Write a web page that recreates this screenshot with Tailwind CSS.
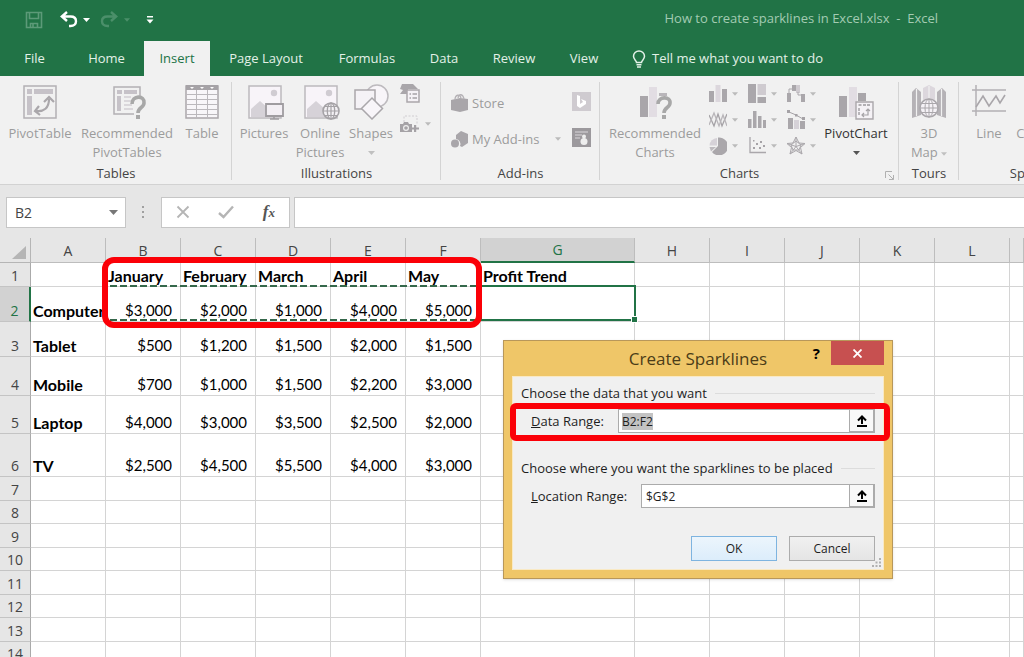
<!DOCTYPE html>
<html lang="en">
<head>
  <meta charset="UTF-8" />
  <meta name="viewport" content="width=device-width, initial-scale=1" />
  <title>How to create sparklines in Excel.xlsx - Excel</title>
  <script src="https://cdn.jsdelivr.net/npm/@tailwindcss/browser@4"></script>
</head>
<body class="flex h-screen flex-col overflow-hidden bg-[#e6e6e6] font-['Open_Sans','Noto_Sans',sans-serif] text-[13px] leading-[19px] text-[#444]">

  <!-- Title bar and ribbon tabs -->
  <header class="shrink-0 bg-[#217346] text-[#e3f1e8]">
    <div class="flex h-[41px] items-center justify-between pr-[86px] pb-px pl-6">
      <div class="flex items-center">
        <button title="Save" class="text-[#5c9a78]">
          <svg class="h-5 w-5" viewBox="0 0 20 20" fill="none" stroke="currentColor" stroke-width="1.6"><path d="M2.5 2.5h15v15h-15zM5.5 2.5v6h9v-6M6.500 17.500v-4h7v4M9 14v3" /></svg>
        </button>
        <button title="Undo" class="ml-4 flex items-center">
          <svg class="h-5 w-[18px]" viewBox="0 0 18 20" fill="none" stroke="#fff" stroke-width="2.4"><path d="M7 2L1.800 6.500l5.200 4.500M2 6.500h8.500c3.500 0 5.500 2 5.500 4.700s-2 4.800-5.500 4.800H9" /></svg>
          <svg class="ml-[5px] h-1 w-[7px]" viewBox="0 0 7 4" fill="#fff"><path d="M0 0h7L3.500 4z" /></svg>
        </button>
        <button title="Redo" class="ml-[10px] flex items-center">
          <svg class="h-5 w-[18px]" viewBox="0 0 18 20" fill="none" stroke="#4b8f6a" stroke-width="2.400"><path d="M11 2l5.200 4.500-5.200 4.500M16 6.500H7.500C4 6.500 2 8.500 2 11.200S4 16 7.500 16H9" /></svg>
          <svg class="ml-[6px] h-1 w-[6px]" viewBox="0 0 7 4" fill="#4b8f6a"><path d="M0 0h7L3.500 4z" /></svg>
        </button>
        <button title="Customize Quick Access Toolbar" class="ml-4">
          <svg class="h-2 w-2" viewBox="0 0 8 8" fill="#fff"><path d="M1 0h6v1.500H1zM.5 3.500h7L4 7.500z" /></svg>
        </button>
      </div>
      <div class="pb-1 whitespace-pre text-[#a3cbb3]">How to create sparklines in Excel.xlsx  -  Excel</div>
    </div>
    <nav class="flex h-[35px] items-stretch whitespace-nowrap">
      <button class="w-[69px]">File</button>
      <button class="w-[75px]">Home</button>
      <button class="w-[66px] bg-[#f1f1f1] text-[#217346]">Insert</button>
      <button class="w-[112px]">Page Layout</button>
      <button class="w-[90px]">Formulas</button>
      <button class="w-[64px]">Data</button>
      <button class="w-[76px]">Review</button>
      <button class="w-[64px]">View</button>
      <button class="ml-4 flex items-center gap-[6px]">
        <svg class="h-[18px] w-[14px]" viewBox="0 0 14 18" fill="none" stroke="currentColor" stroke-width="1.500"><path d="M4.500 12.500c0-2-3-3-3-6.200a5.500 5.300 0 0 1 11 0c0 3.200-3 4.200-3 6.200zM4.500 14.700h5M5 17h4" /></svg>
        Tell me what you want to do
      </button>
    </nav>
  </header>

  <!-- Ribbon -->
  <div class="flex h-[109px] shrink-0 overflow-hidden border-b border-[#d2d2d2] bg-[#f1f1f1] text-[#9c9c9c]">

    <section class="relative flex w-[232px] shrink-0 flex-col pt-2">
      <div class="flex flex-1 items-start pl-px">
        <button class="flex w-[78px] flex-col items-center gap-1">
          <svg class="h-9 w-9" viewBox="0 0 36 36" fill="none"><path d="M2 2h32v32H2z" stroke="#b3b0b4" stroke-width="1.500" /><path d="M5 5h5v5H5zM12 5h19v5H12zM5 12h5v19H5z" fill="#c6c2c8" /><path d="M14 27c8 1 13-3 13-12M17 22l-4 5 5 4M22 18l5-5 5 5" stroke="#aaa7ab" stroke-width="2.200" /></svg>
          <span>PivotTable</span>
        </button>
        <button class="flex w-24 flex-col items-center gap-1">
          <svg class="ml-[6px] h-9 w-9" viewBox="0 0 36 36" fill="none"><path d="M28 12V3H2v27h20" stroke="#b3b0b4" stroke-width="1.500" /><path d="M5 6h5v4H5zM12 6h13v4H12zM5 12h4v15H5z" fill="#c6c2c8" /><path d="M12 13h7M12 17h7M12 21h8M12 25h9" stroke="#d2ced4" stroke-width="1.500" /><path d="M20 20c0-9 13-9 12-1 0 5-6 4-6 10" stroke="#a8a8a8" stroke-width="3.600" /><path d="M24 31h4v4h-4z" fill="#a8a8a8" /></svg>
          <span>Recommended<br />PivotTables</span>
        </button>
        <button class="flex w-[54px] flex-col items-center gap-1">
          <svg class="h-9 w-9" viewBox="0 0 36 36" fill="none"><path d="M2 2h32v32H2z" fill="#f8f6f9" stroke="#aaa7ab" stroke-width="1.500" /><path d="M2 1h32v5H2z" fill="#a6a3a7" /><path d="M6 3h4l-2 2zM16 3h4l-2 2zM26 3h4l-2 2z" fill="#fff" /><path d="M2 10.500h32M2 15.500h32M2 20.500h32M2 25.500h32M2 30.500h32M12.500 6v28M23.500 6v28" stroke="#bbb8bc" /></svg>
          <span>Table</span>
        </button>
      </div>
      <h2 class="h-5 text-center text-[#444]">Tables</h2>
      <i class="absolute top-[6px] right-0 h-[98px] w-px bg-[#d4d4d4]"></i>
    </section>

    <section class="relative flex w-[209px] shrink-0 flex-col pt-2">
      <div class="flex flex-1 items-start pl-[2px]">
        <button class="flex w-[60px] flex-col items-center gap-1">
          <svg class="ml-1 h-9 w-9" viewBox="0 0 36 36" fill="none"><path d="M1 2h32v32H1z" fill="#f8f4f9" stroke="#bcb9bd" stroke-width="1.500" /><path d="M3 33v-8l9-8 9 8v8z" fill="#d6d2d8" /><circle cx="26" cy="9" r="3.200" fill="#d0ccd2" /><path d="M18 20h17v12H18z" fill="#f3eff4" stroke="#9f9ca0" stroke-width="1.800" /><path d="M26 32v3M22 35h9" stroke="#9f9ca0" stroke-width="1.600" /></svg>
          <span>Pictures</span>
        </button>
        <button class="flex w-[52px] flex-col items-center gap-1">
          <svg class="ml-1 h-9 w-9" viewBox="0 0 36 36" fill="none"><path d="M1 2h32v32H1z" fill="#f8f4f9" stroke="#bcb9bd" stroke-width="1.500" /><path d="M3 33v-8l9-8 9 8v8z" fill="#d6d2d8" /><circle cx="25" cy="9" r="3.200" fill="#d0ccd2" /><circle cx="27" cy="27" r="8" fill="#f3f0f4" stroke="#a5a2a6" stroke-width="1.600" /><ellipse cx="27" cy="27" rx="3.700" ry="8" stroke="#a5a2a6" stroke-width="1.300" /><path d="M19 27h16M21 22.500h12M21 31.500h12M27 19v16" stroke="#a5a2a6" stroke-width="1.200" /></svg>
          <span>Online<br />Pictures</span>
        </button>
        <button class="flex w-[50px] flex-col items-center gap-1">
          <svg class="h-9 w-9" viewBox="0 0 36 36" fill="none" stroke="#aaa7ab" stroke-width="1.500"><circle cx="24" cy="12" r="11" fill="#f8f5f9" stroke="#bdbabe" /><path d="M2 6h20v19H2z" fill="#f5f2f6" /><path d="M19 14l10.500 10.500L19 35 8.500 24.500z" fill="#f8f5f9" /></svg>
          <span>Shapes</span>
          <svg class="mt-1 h-1 w-[7px]" viewBox="0 0 7 4" fill="#c0c0c0"><path d="M0 0h7L3.500 4z" /></svg>
        </button>
        <div class="flex flex-col gap-3 pl-1">
          <button title="SmartArt">
            <svg class="h-[19px] w-5" viewBox="0 0 20 19" fill="none"><path d="M2 0h11l5 5H8v5H0l3-4-3-1z" fill="#a9a6aa" /><path d="M7 6h12v12H7z" fill="#f5f2f6" stroke="#aaa7ab" stroke-width="1.500" /><path d="M9.500 10h1.500M9.500 14h1.500M12.500 10h4.500M12.500 14h4.500" stroke="#a5a2a6" stroke-width="1.500" /></svg>
          </button>
          <button title="Screenshot" class="flex items-center gap-[5px]">
            <svg class="h-[18px] w-5" viewBox="0 0 20 18" fill="none"><path d="M4 7V1h13v9" stroke="#d0cdd1" stroke-dasharray="2 1.500" /><path d="M0 9h3l1-2h4l1 2h3v8H0zM14 10h2.200v2.500h2.800v2h-2.800V17H14v-2.500h-2v-2h2z" fill="#a5a2a6" /><circle cx="6" cy="13" r="2.400" stroke="#eee" stroke-width="1.200" /></svg>
            <svg class="h-1 w-[6px]" viewBox="0 0 7 4" fill="#bbb"><path d="M0 0h7L3.500 4z" /></svg>
          </button>
        </div>
      </div>
      <h2 class="h-5 text-center text-[#444]">Illustrations</h2>
      <i class="absolute top-[6px] right-0 h-[98px] w-px bg-[#d4d4d4]"></i>
    </section>

    <section class="relative flex w-[159px] shrink-0 flex-col pt-2">
      <div class="flex flex-1 justify-between pt-2 pr-[9px] pl-[10px]">
        <div class="flex flex-col gap-[14px]">
          <button class="flex h-[22px] items-center gap-1">
            <svg class="h-[18px] w-[17px]" viewBox="0 0 17 18" fill="none"><path d="M0 6l9-2 8 1v11l-8 2-9-2z" fill="#a9a6aa" /><path d="M4 6c0-6 5-6 6-2M7 4c1-5 5-4 6 1" stroke="#b5b2b6" stroke-width="1.300" /></svg>
            Store
          </button>
          <button class="flex h-[22px] items-center gap-1">
            <svg class="h-[17px] w-[17px]" viewBox="0 0 17 17" fill="#a9a6aa"><path d="M10 0l7 3v9l-6 4-2-1a5 5 0 0 0-4-7V4z" /><circle cx="4" cy="12.500" r="4" /></svg>
            My Add-ins
            <svg class="ml-3 h-1 w-[6px]" viewBox="0 0 7 4" fill="#bbb"><path d="M0 0h7L3.500 4z" /></svg>
          </button>
        </div>
        <div class="flex flex-col gap-[17px]">
          <button title="Bing Maps"><svg class="h-[19px] w-[19px]" viewBox="0 0 19 19"><path d="M0 0h19v19H0z" fill="#cfcbd0" /><path d="M5 3l3 1v8l3-2-2-3 5 2v3l-6 4-3-2z" fill="#fff" /></svg></button>
          <button title="People Graph"><svg class="h-[19px] w-[19px]" viewBox="0 0 19 19"><path d="M0 0h19v19H0z" fill="#9c999d" /><path d="M3 4h13M3 7h7M3 10h5" stroke="#c5c2c6" stroke-width="1.300" /><circle cx="12" cy="8.500" r="2" fill="#eee" /><circle cx="12" cy="13.500" r="3.500" fill="#eee" /></svg></button>
        </div>
      </div>
      <h2 class="h-5 text-center text-[#444]">Add-ins</h2>
      <i class="absolute top-[6px] right-0 h-[98px] w-px bg-[#d4d4d4]"></i>
    </section>

    <section class="relative flex w-[299px] shrink-0 flex-col pt-2">
      <div class="flex flex-1 items-start pl-1">
        <button class="flex w-[102px] flex-col items-center gap-1">
          <svg class="h-9 w-9" viewBox="0 0 36 36" fill="none"><path d="M3 12h8v21H3z" fill="#a9a6aa" /><path d="M12 3h8v30h-8z" fill="#e2dde3" /><path d="M22 9h8v3h-8z" fill="#b9b6ba" /><path d="M21 20c0-8 13-8 12-1 0 5-6 4-6 10" stroke="#a8a8a8" stroke-width="3.600" /><path d="M25 31h4v4h-4z" fill="#a8a8a8" /></svg>
          <span>Recommended<br />Charts</span>
        </button>
        <div class="grid grid-cols-[39px_39px_34px] gap-y-[7px] pl-[3px]">
          <button title="Column Chart" class="flex items-center gap-[5px]">
            <svg class="h-[19px] w-[18px]" viewBox="0 0 18 19"><path d="M0 7h5v11H0zM13 5h5v13h-5z" fill="#aaa7ab" /><path d="M6.500 1h5v17h-5z" fill="#dcd7dd" /></svg>
            <svg class="h-1 w-[6px]" viewBox="0 0 7 4" fill="#bbb"><path d="M0 0h7L3.500 4z" /></svg>
          </button>
          <button title="Hierarchy Chart" class="flex items-center gap-[5px]">
            <svg class="h-[19px] w-[18px]" viewBox="0 0 18 19"><path d="M0 0h8v19H0zM9.500 13H19v6H9.500z" fill="#aaa7ab" /><path d="M9.500 0H18v11H9.500z" fill="#cfcbd0" /></svg>
            <svg class="h-1 w-[6px]" viewBox="0 0 7 4" fill="#bbb"><path d="M0 0h7L3.500 4z" /></svg>
          </button>
          <button title="Waterfall Chart" class="flex items-center gap-[5px]">
            <svg class="h-[19px] w-[18px]" viewBox="0 0 18 19"><path d="M0 9h4v9H0zM5 1h4v6H5zM14 10h4v8h-4z" fill="#aaa7ab" /><path d="M9 1h4v8H9z" fill="#cfcbd0" /><path d="M2 9V5h4M11 8v3h5" stroke="#aaa7ab" fill="none" /></svg>
            <svg class="h-1 w-[6px]" viewBox="0 0 7 4" fill="#bbb"><path d="M0 0h7L3.500 4z" /></svg>
          </button>
          <button title="Line Chart" class="flex items-center gap-[5px]">
            <svg class="h-[19px] w-[18px]" viewBox="0 0 18 19" fill="none"><path d="M0 5l5 11 4-12 4 12 5-12" stroke="#a5a2a6" stroke-width="1.300" /><path d="M0 15L5 3l5 13 4-11 4 11" stroke="#b9b6ba" stroke-width="1.300" /></svg>
            <svg class="h-1 w-[6px]" viewBox="0 0 7 4" fill="#bbb"><path d="M0 0h7L3.500 4z" /></svg>
          </button>
          <button title="Statistic Chart" class="flex items-center gap-[5px]">
            <svg class="h-[19px] w-[18px]" viewBox="0 0 18 19"><path d="M0 9h3.500v9H0zM5 1h3.500v17H5zM10 6h3.500v12H10zM15 10h3v8h-3z" fill="#aaa7ab" /></svg>
            <svg class="h-1 w-[6px]" viewBox="0 0 7 4" fill="#bbb"><path d="M0 0h7L3.500 4z" /></svg>
          </button>
          <button title="Combo Chart" class="flex items-center gap-[5px]">
            <svg class="h-[19px] w-[18px]" viewBox="0 0 18 19"><path d="M1 8h5v11H1zM13 11h5v8h-5z" fill="#aaa7ab" /><path d="M7 10h5v9H7z" fill="#d6d2d8" /><path d="M2 2l7 3 7 4" stroke="#a5a2a6" fill="none" /><path d="M0 0h3v3H0zM8 4h2.500v2.500H8zM15 7h3v3h-3z" fill="#a5a2a6" /></svg>
            <svg class="h-1 w-[6px]" viewBox="0 0 7 4" fill="#bbb"><path d="M0 0h7L3.500 4z" /></svg>
          </button>
          <button title="Pie Chart" class="flex items-center gap-[5px]">
            <svg class="h-[19px] w-[18px]" viewBox="0 0 18 19"><path d="M9 1.500V10L3 16a9 9 0 1 0 6-14.500z" fill="#aaa7ab" /><path d="M8 2v7.500H.5A8 8 0 0 1 8 2z" fill="#d6d2d8" /><path d="M.5 11H7l-5 4.500z" fill="#bdbabe" /></svg>
            <svg class="h-1 w-[6px]" viewBox="0 0 7 4" fill="#bbb"><path d="M0 0h7L3.500 4z" /></svg>
          </button>
          <button title="Scatter Chart" class="flex items-center gap-[5px]">
            <svg class="h-[19px] w-[18px]" viewBox="0 0 18 19"><path d="M2 1v15.500h16" stroke="#aaa7ab" stroke-width="1.300" fill="none" /><path d="M5 11h2v2H5zM8 7h2v2H8zM12 5h2v2h-2zM11 11h2v2h-2zM15 9h2v2h-2zM5 4h1.500v1.500H5z" fill="#a5a2a6" /></svg>
            <svg class="h-1 w-[6px]" viewBox="0 0 7 4" fill="#bbb"><path d="M0 0h7L3.500 4z" /></svg>
          </button>
          <button title="Surface or Radar Chart" class="flex items-center gap-[5px]">
            <svg class="h-[19px] w-[18px]" viewBox="0 0 18 19" fill="none" stroke="#aaa7ab"><path d="M9 1l3 6 6 .5-4.500 4 1.500 6.500-6-3.500L3 18l1.500-6.500L0 7.500 6 7zM9 1v9.500l9-3M9 10.500l6 7.500M9 10.500L3 18M9 10.500l-9-3M9 5l5 4-2 5H6L4 9z" /></svg>
            <svg class="h-1 w-[6px]" viewBox="0 0 7 4" fill="#bbb"><path d="M0 0h7L3.500 4z" /></svg>
          </button>
        </div>
        <button class="flex w-[70px] flex-col items-center gap-1 text-[#333]">
          <svg class="h-9 w-9" viewBox="0 0 36 36" fill="none"><path d="M1 12h8v21H1z" fill="#a9a6aa" /><path d="M11 3h8v30h-8z" fill="#e2dde3" /><path d="M20 9h8v8h-8z" fill="#a9a6aa" /><path d="M18 18h17v17H18z" fill="#f5f2f6" stroke="#aaa7ab" stroke-width="1.400" /><path d="M20.500 21h3M25 21h8M21 24v8" stroke="#b3b0b4" stroke-width="1.800" stroke-dasharray="3 1" /><path d="M24 31h6v-6M26 29l-2 2 2 2M28 27l2-2 2 2" stroke="#a5a2a6" stroke-width="1.200" /></svg>
          <span>PivotChart</span>
          <svg class="mt-1 h-1 w-[7px]" viewBox="0 0 7 4" fill="#555"><path d="M0 0h7L3.500 4z" /></svg>
        </button>
      </div>
      <h2 class="h-5 pr-5 text-center text-[#444]">Charts</h2>
      <button title="See all charts" class="absolute right-[5px] bottom-1">
        <svg class="h-[9px] w-[9px]" viewBox="0 0 9 9" fill="none" stroke="#b0b0b0"><path d="M.5 7V.5H7M3.500 3.500l5 5M8.500 4v4.500H4" /></svg>
      </button>
      <i class="absolute top-[6px] right-0 h-[98px] w-px bg-[#d4d4d4]"></i>
    </section>

    <section class="relative flex w-[60px] shrink-0 flex-col pt-2">
      <div class="flex flex-1 items-start justify-center">
        <button class="flex flex-col items-center gap-1">
          <svg class="h-9 w-9" viewBox="0 0 36 36" fill="none"><path d="M1 8l4-4 5 4v23l-9 3zM26 8l5-4 4 4v26l-9-3z" fill="#b5b2b6" /><path d="M12 4l6-3 6 3v28H12z" fill="#dcd7dd" /><path d="M5.500 5v27M30.500 5v27M18 2v14" stroke="#f1f1f1" stroke-width="1.200" /><circle cx="18" cy="24" r="9" fill="#f5f2f6" stroke="#aaa7ab" stroke-width="1.500" /><ellipse cx="18" cy="24" rx="4" ry="9" stroke="#aaa7ab" /><path d="M9 24h18M11 19.500h14M11 28.500h14M18 15v18" stroke="#aaa7ab" /></svg>
          <span>3D<br />Map <svg class="inline h-1 w-[6px]" viewBox="0 0 7 4" fill="#c0c0c0"><path d="M0 0h7L3.500 4z" /></svg></span>
        </button>
      </div>
      <h2 class="h-5 text-center text-[#444]">Tours</h2>
      <i class="absolute top-[6px] right-0 h-[98px] w-px bg-[#d4d4d4]"></i>
    </section>

    <section class="relative flex w-[164px] shrink-0 flex-col pt-2">
      <div class="flex flex-1 items-start pl-2">
        <button class="flex w-11 flex-col items-center gap-1">
          <svg class="h-9 w-9" viewBox="0 0 36 36" fill="none"><path d="M1 6h34M1 27h34M5 1v31" stroke="#b3b0b4" stroke-width="1.500" /><path d="M5 23l7-11 6 10 7-10 4 7 5-8" stroke="#a9a6aa" stroke-width="1.600" /></svg>
          <span>Line</span>
        </button>
        <button class="flex w-[58px] flex-col items-center gap-1">
          <svg class="h-9 w-9" viewBox="0 0 36 36" fill="#b3b0b4"><path d="M8 18h5v12H8zM15 8h5v22h-5zM22 14h5v16h-5z" /></svg>
          <span>Column</span>
        </button>
      </div>
      <h2 class="h-5 text-center text-[#444]">Sparklines</h2>
    </section>
  </div>

  <!-- Name box and formula bar -->
  <div class="flex h-[53px] shrink-0 items-center pt-px pl-[6px]">
    <div class="flex h-[31px] w-[120px] items-center border border-[#c6c6c6] bg-white pr-[7px] pl-2">
      <input aria-label="Name Box" value="B2" class="min-w-0 flex-1 text-[14px] outline-none" />
      <button title="Name list"><svg class="h-[5px] w-[9px]" viewBox="0 0 9 5" fill="#777"><path d="M0 0h9L4.500 5z" /></svg></button>
    </div>
    <svg class="mx-4 h-3 w-[3px]" viewBox="0 0 3 12" fill="#a0a0a0"><path d="M0 0h2v2H0zM0 5h2v2H0zM0 10h2v2H0z" /></svg>
    <div class="flex h-[31px] w-[129px] items-center justify-between border border-[#c6c6c6] bg-white px-[14px]">
      <button title="Cancel"><svg class="h-[14px] w-[14px]" viewBox="0 0 14 14" fill="none" stroke="#b5b5b5" stroke-width="1.800"><path d="M1.500 1.500l11 11M12.500 1.500l-11 11" /></svg></button>
      <button title="Enter"><svg class="h-[14px] w-4" viewBox="0 0 16 14" fill="none" stroke="#b5b5b5" stroke-width="2.400"><path d="M1 8l4.500 4L15 1.500" /></svg></button>
      <button title="Insert Function" class="font-['Liberation_Serif',serif] text-[17px] font-bold text-[#555] italic">f<span class="text-[13px]">x</span></button>
    </div>
    <input aria-label="Formula Bar" class="ml-1 h-[31px] min-w-0 flex-1 border border-r-0 border-[#c6c6c6] bg-white px-2 outline-none" />
  </div>

  <!-- Worksheet -->
  <main class="relative min-h-0 flex-1 overflow-hidden bg-white">
    <table class="w-full table-fixed border-separate border-spacing-0">
      <colgroup>
        <col class="w-[31px]" /><col class="w-[75px]" /><col class="w-[75px]" /><col class="w-[75px]" /><col class="w-[75px]" />
        <col class="w-[75px]" /><col class="w-[75px]" /><col class="w-[154px]" /><col class="w-[75px]" /><col class="w-[75px]" />
        <col class="w-[75px]" /><col class="w-[75px]" /><col class="w-[75px]" /><col />
      </colgroup>
      <thead>
        <tr id="columnHeads" class="h-[25px]"></tr>
      </thead>
      <tbody id="sheetRows" class="font-['Lato','Open_Sans',sans-serif] text-black"></tbody>
    </table>

    <!-- Copy marquee around B2:F2 and the active cell G2 -->
    <svg class="absolute top-[47px] left-[106px] h-9 w-[375px]" stroke="#35684b" stroke-width="2" stroke-dasharray="7 3"><path d="M4 1h371M4 35h371" /></svg>
    <div class="absolute top-[47px] left-[480px] h-9 w-[156px] border-2 border-[#217346]">
      <i class="absolute -right-1 -bottom-1 h-[7px] w-[7px] border border-white bg-[#217346]"></i>
    </div>
    <div class="absolute top-[19px] left-[102px] h-[71px] w-[380px] rounded-xl border-[6px] border-[#fb0007]"></div>

    <!-- Create Sparklines dialog -->
    <form class="absolute top-[102px] left-[503px] w-[390px] border border-[#b8975a] bg-[#efc668] px-2 pb-2 text-[#1e1e1e] shadow-sm">
      <div class="relative flex h-[35px] items-center justify-center">
        <h2 class="text-[17px] text-[#4b3c18]">Create Sparklines</h2>
        <button type="button" title="Help" class="absolute top-[3px] right-[64px] text-[15px] font-bold text-black">?</button>
        <button type="button" title="Close" class="absolute top-0 right-0 flex h-6 w-[53px] items-center justify-center bg-[#c75050]">
          <svg class="h-[9px] w-[9px]" viewBox="0 0 9 9" fill="none" stroke="#fff" stroke-width="1.800"><path d="M.5 .5l8 8M8.500 .5l-8 8" /></svg>
        </button>
      </div>
      <div class="relative border border-[#f9e9c4] bg-[#f0f0f0] px-2 pt-[7px] pb-2">
        <div class="flex items-center gap-2">Choose the data that you want<i class="h-px flex-1 bg-[#dcdcdc]"></i></div>
        <div class="mt-[6px] flex h-6 items-center pl-[10px]">
          <label for="dataRange" class="w-[87px]"><u>D</u>ata Range:</label>
          <input id="dataRange" value="B2:F2" class="h-6 min-w-0 flex-1 border border-[#ababab] bg-white px-[3px] text-[12px] outline-none selection:bg-[#c3c3c3] selection:text-[#1e1e1e]" />
          <button type="button" title="Collapse Dialog" class="-ml-px flex h-6 w-[26px] items-center justify-center border border-[#ababab] border-r-2 border-b-2 bg-[#f8f8f8]">
            <svg class="h-3 w-3" viewBox="0 0 12 12" fill="none" stroke="#000" stroke-width="2"><path d="M6 9V1.500M2 5.500l4-4 4 4M1 11h10" /></svg>
          </button>
        </div>
        <div class="mt-[26px] flex items-center gap-2 whitespace-nowrap">Choose where you want the sparklines to be placed<i class="h-px flex-1 bg-[#dcdcdc]"></i></div>
        <div class="mt-[6px] flex h-6 items-center pl-[10px]">
          <label for="locationRange" class="w-[110px]"><u>L</u>ocation Range:</label>
          <input id="locationRange" value="$G$2" class="h-6 min-w-0 flex-1 border border-[#ababab] bg-white px-1 text-[12px] outline-none" />
          <button type="button" title="Collapse Dialog" class="-ml-px flex h-6 w-[26px] items-center justify-center border border-[#ababab] border-r-2 border-b-2 bg-[#f8f8f8]">
            <svg class="h-3 w-3" viewBox="0 0 12 12" fill="none" stroke="#000" stroke-width="2"><path d="M6 9V1.500M2 5.500l4-4 4 4M1 11h10" /></svg>
          </button>
        </div>
        <div class="mt-7 flex justify-end gap-3">
          <button type="button" class="h-[25px] w-[86px] border border-[#7eb4e0] bg-linear-to-b from-[#ecf5fc] to-[#dcedfb] text-[12px]">OK</button>
          <button type="button" class="h-[25px] w-[86px] border border-[#acacac] bg-linear-to-b from-[#f0f0f0] to-[#e5e5e5] text-[12px]">Cancel</button>
        </div>
        <svg class="absolute right-[2px] bottom-[2px] h-[9px] w-[9px]" viewBox="0 0 9 9" fill="#b0b0b0"><path d="M7 0h2v2H7zM3.500 3.500h2v2h-2zM7 3.500h2v2H7zM0 7h2v2H0zM3.500 7h2v2h-2zM7 7h2v2H7z" /></svg>
      </div>
      <div class="absolute top-[62px] left-[6px] h-[38px] w-[380px] rounded-md border-[6px] border-[#fb0007]"></div>
    </form>
  </main>

  <script>
    const columns = ['A', 'B', 'C', 'D', 'E', 'F', 'G', 'H', 'I', 'J', 'K', 'L', ''];
    const rows = [
      { height: 24, cells: ['', 'January', 'February', 'March', 'April', 'May', 'Profit Trend'] },
      { height: 35, cells: ['Computer', '$3,000', '$2,000', '$1,000', '$4,000', '$5,000'] },
      { height: 35, cells: ['Tablet', '$500', '$1,200', '$1,500', '$2,000', '$1,500'] },
      { height: 39, cells: ['Mobile', '$700', '$1,000', '$1,500', '$2,200', '$3,000'] },
      { height: 38, cells: ['Laptop', '$4,000', '$3,000', '$3,500', '$2,500', '$2,000'] },
      { height: 43, cells: ['TV', '$2,500', '$4,500', '$5,500', '$4,000', '$3,000'] },
      { height: 24, cells: [] },
      { height: 23, cells: [] },
      { height: 24, cells: [] },
      { height: 23, cells: [] },
      { height: 24, cells: [] },
      { height: 23, cells: [] },
      { height: 24, cells: [] },
      { height: 23, cells: [] },
    ];

    // Column letters, with the select-all corner first
    let heads = '<th class="border-r border-b border-[#b5b5b5] bg-[#e6e6e6]"><svg class="mt-1 ml-3 h-[13px] w-[14px]" viewBox="0 0 14 13" fill="#b5b5b5"><path d="M14 0v13H0z" /></svg></th>';
    columns.forEach(letter => {
      const state = letter === 'G'
        ? 'border-r border-b-2 border-r-[#bdbdbd] border-b-[#217346] bg-[#d2d2d2] text-[#217346]'
        : 'border-r border-b border-[#bdbdbd] bg-[#e6e6e6]';
      heads += `<th scope="col" class="p-0 text-[14px] font-normal ${state}">${letter}</th>`;
    });
    document.getElementById('columnHeads').innerHTML = heads;

    let body = '';
    rows.forEach((row, i) => {
      const state = i === 1
        ? 'border-r-2 border-b border-r-[#217346] border-b-[#c4c4c4] bg-[#d2d2d2] text-[#217346]'
        : 'border-r border-b border-r-[#aaa] border-b-[#c4c4c4] bg-[#e6e6e6] text-[#444]';
      body += `<tr style="height:${row.height}px"><th scope="row" class="p-0 pb-px align-bottom font-['Open_Sans',sans-serif] text-[14px] font-normal ${state}">${i + 1}</th>`;
      columns.forEach((letter, c) => {
        const text = row.cells[c] || '';
        const align = text.startsWith('$') ? 'pr-2 text-right text-[15px]' : 'pl-[2px] text-left text-[16px] font-bold';
        body += `<td class="overflow-hidden border-r border-b border-[#d4d4d4] p-0 pb-px align-bottom whitespace-nowrap ${align}">${text}</td>`;
      });
      body += '</tr>';
    });
    document.getElementById('sheetRows').innerHTML = body;

    // The data range opens focused with its value selected
    const dataRange = document.getElementById('dataRange');
    dataRange.focus();
    dataRange.select();
  </script>
</body>
</html>
